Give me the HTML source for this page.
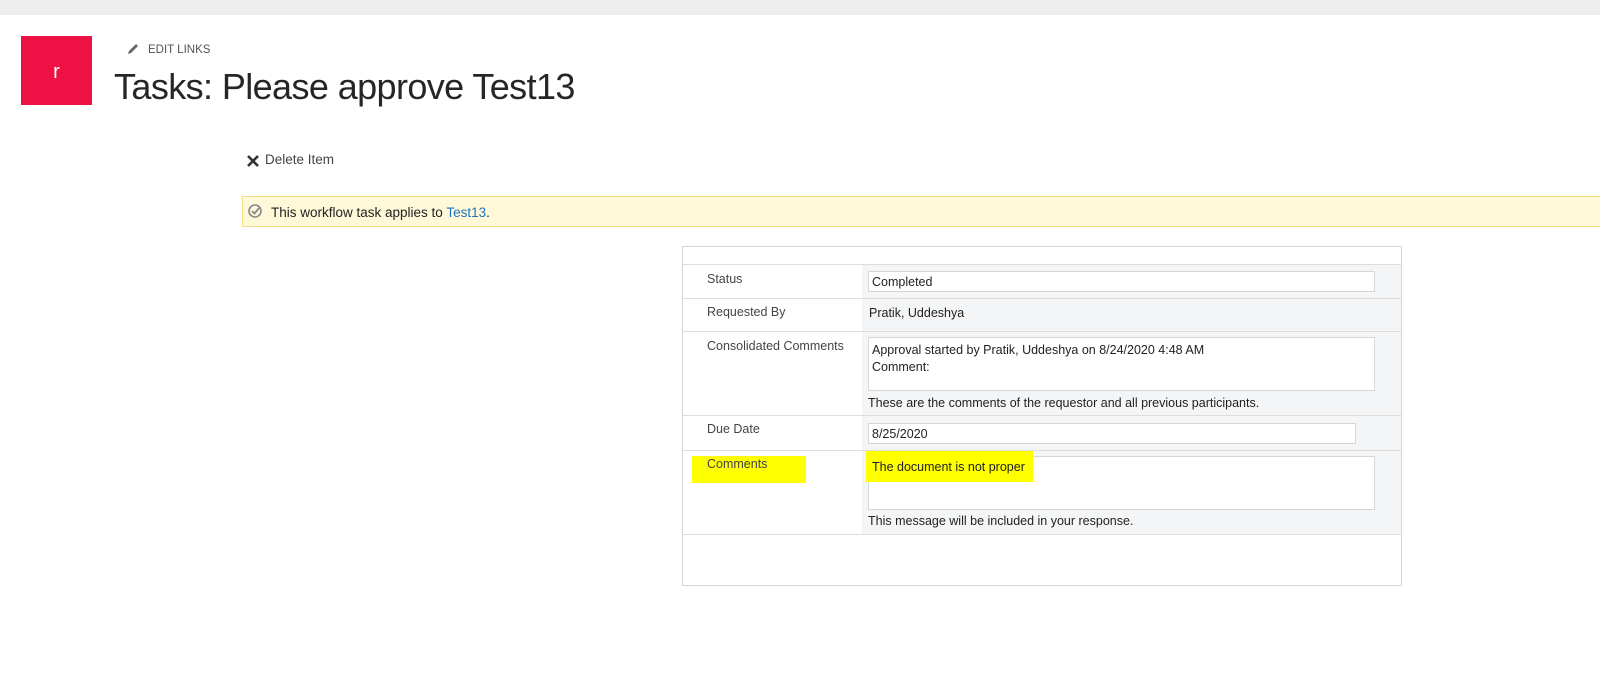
<!DOCTYPE html>
<html><head><style>
body{margin:0;width:1600px;height:693px;background:#fff;font-family:"Liberation Sans",sans-serif;position:relative;overflow:hidden}
.abs{position:absolute}
.top{left:0;top:0;width:1600px;height:15px;background:#eeeeee}
.logo{left:21px;top:36px;width:71px;height:69px;background:#ed1144;color:#fff;font-size:20px;text-align:center;line-height:72px}
.box{border:1px solid #d6d6d6;background:#fff;box-sizing:border-box}
.lbl{font-size:12.5px;color:#444;left:707px}
.val{font-size:12.5px;color:#222}
.hl{background:#ffff00}
</style></head><body>
<div class="abs top"></div>
<div class="abs logo">r</div>
<svg class="abs" style="left:126px;top:42px" width="14" height="14"><path d="M2 12 L3 9 L10 2 L12 4 L5 11 Z" fill="#666"/></svg>
<div class="abs" style="left:148px;top:44px;font-size:11.5px;color:#555">EDIT LINKS</div>
<div class="abs" style="left:114px;top:66px;font-size:36px;color:#262626;letter-spacing:-0.6px">Tasks: Please approve Test13</div>
<svg class="abs" style="left:246px;top:154px" width="14" height="14"><path d="M2 2 L12 12 M12 2 L2 12" stroke="#333" stroke-width="2.6"/></svg>
<div class="abs" style="left:265px;top:152px;font-size:13.5px;color:#444">Delete Item</div>
<div class="abs" style="left:242px;top:196px;width:1370px;height:31px;background:#fff9da;border:1px solid #f3dc86;box-sizing:border-box"></div>
<svg class="abs" style="left:247px;top:203px" width="16" height="16"><circle cx="8" cy="8" r="6" fill="none" stroke="#888" stroke-width="1.6"/><path d="M5 8 L7.5 10.5 L12 5" fill="none" stroke="#888" stroke-width="1.8"/></svg>
<div class="abs" style="left:271px;top:205px;font-size:13.5px;color:#222">This workflow task applies to <span style="color:#1e73be">Test13</span>.</div>
<div class="abs" style="left:682px;top:246px;width:720px;height:340px;border:1px solid #d6d6d6;box-sizing:border-box"></div>
<div class="abs" style="left:862px;top:264px;width:539px;height:270px;background:#f4f5f6"></div>
<div class="abs" style="left:683px;top:264px;width:718px;height:1px;background:#ddd"></div>
<div class="abs" style="left:683px;top:298px;width:718px;height:1px;background:#ddd"></div>
<div class="abs" style="left:683px;top:331px;width:718px;height:1px;background:#ddd"></div>
<div class="abs" style="left:683px;top:415px;width:718px;height:1px;background:#ddd"></div>
<div class="abs" style="left:683px;top:450px;width:718px;height:1px;background:#ddd"></div>
<div class="abs" style="left:683px;top:534px;width:718px;height:1px;background:#ddd"></div>
<div class="abs hl" style="left:692px;top:456px;width:114px;height:27px"></div>
<div class="abs lbl" style="top:272px">Status</div>
<div class="abs lbl" style="top:305px">Requested By</div>
<div class="abs lbl" style="top:339px">Consolidated Comments</div>
<div class="abs lbl" style="top:422px">Due Date</div>
<div class="abs lbl" style="top:457px">Comments</div>
<div class="abs box" style="left:868px;top:271px;width:507px;height:21px"></div>
<div class="abs val" style="left:872px;top:275px">Completed</div>
<div class="abs val" style="left:869px;top:306px">Pratik, Uddeshya</div>
<div class="abs box" style="left:868px;top:337px;width:507px;height:54px"></div>
<div class="abs val" style="left:872px;top:342px;line-height:17px">Approval started by Pratik, Uddeshya on 8/24/2020 4:48 AM<br>Comment:</div>
<div class="abs val" style="left:868px;top:396px">These are the comments of the requestor and all previous participants.</div>
<div class="abs box" style="left:868px;top:423px;width:488px;height:21px"></div>
<div class="abs val" style="left:872px;top:427px">8/25/2020</div>
<div class="abs box" style="left:868px;top:456px;width:507px;height:54px"></div>
<div class="abs hl" style="left:866px;top:451px;width:167px;height:31px"></div>
<div class="abs val" style="left:872px;top:460px">The document is not proper</div>
<div class="abs val" style="left:868px;top:514px">This message will be included in your response.</div>
</body></html>
